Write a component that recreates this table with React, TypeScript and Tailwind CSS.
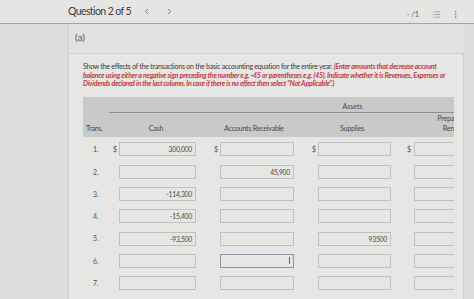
import { ChevronLeft, ChevronRight, List, EllipsisVertical } from 'lucide-react'

type Row = {
  n: number
  cash?: string
  ar?: string
  supplies?: string
  focus?: boolean
}

const rows: Row[] = [
  { n: 1, cash: '300,000' },
  { n: 2, ar: '45,900' },
  { n: 3, cash: '-114,300' },
  { n: 4, cash: '-15,400' },
  { n: 5, cash: '-93,500', supplies: '93500' },
  { n: 6, focus: true },
  { n: 7 },
  { n: 8 },
]

function Cell({ value, focus, width }: { value?: string; focus?: boolean; width: string }) {
  return (
    <div
      className={`${width} h-[14px] shrink-0 flex items-center justify-end pr-[3px] text-[6.8px] tracking-[-0.25px] text-[#4a4a4a] bg-[#e6e6e4] ${
        focus ? 'border-[1.5px] border-[#8e95a2]' : 'border border-[#c0c0be]'
      }`}
    >
      {value}
      {focus && <span className="w-px h-[7px] bg-[#666]" />}
    </div>
  )
}

function Dollar({ show, className }: { show: boolean; className: string }) {
  return <span className={`${className} shrink-0 text-[7px] text-[#555]`}>{show ? '$' : ''}</span>
}

export default function App() {
  return (
    <div className="w-[474px] h-[299px] overflow-hidden bg-[#dcdcda] font-['Lato','Noto_Sans',sans-serif] text-[#333]">
      <header className="h-[24px] flex items-center bg-[#e5e5e3] border-b-[1.5px] border-[#a3a3a1]">
        <div className="pl-[68px] flex items-center">
          <span className="text-[10.5px] tracking-[-0.6px] text-[#3c3c3c]">Question 2 of 5</span>
          <ChevronLeft className="ml-[11px] w-[9px] h-[9px] text-[#555]" strokeWidth={2} />
          <ChevronRight className="ml-[14px] w-[9px] h-[9px] text-[#555]" strokeWidth={2} />
        </div>
        <div className="ml-auto mt-[5px] flex items-center pr-[14px]">
          <span className="text-[8px] tracking-[-0.2px] text-[#666]">- /1</span>
          <List className="ml-[13px] w-[9px] h-[9px] text-[#777]" strokeWidth={1.6} />
          <EllipsisVertical className="ml-[10px] w-[9px] h-[9px] text-[#777]" strokeWidth={2} />
        </div>
      </header>

      <div className="ml-[68px] mr-[10px] border-l border-[#cdcdcb] bg-[#e2e2e0] h-[280px]">
        <div className="h-[29px] flex items-center pb-[3px] pl-[6px] text-[10px] text-[#555]">(a)</div>

        <div className="border-t border-r border-[#cdcdcb] bg-[#e6e6e4] pl-[14px] pr-[11px] pt-[8px] h-[300px]">
          <p className="text-[7px] leading-[8.6px] tracking-[-0.25px] text-[#3a3a3a] whitespace-nowrap">
            Show the effects of the transactions on the basic accounting equation for the entire year.{' '}
            <span className="font-bold italic text-[#c23a3f]">
              (Enter amounts that decrease account
              <br />
              balance using either a negative sign preceding the number e.g. -45 or parentheses e.g. (45). Indicate
              whether it is Revenues, Expenses or
              <br />
              Dividends declared in the last column. In case if there is no effect then select "Not Applicable".)
            </span>
          </p>

          <div className="mt-[9.7px] w-[371px] overflow-hidden">
            <div className="h-[40px] bg-[#c9c9c7] flex flex-col">
              <div className="h-[15px] flex items-center justify-center pl-[168px] pt-[2px] text-[7px] text-[#484848]">
                Assets
              </div>
              <div className="ml-[26px] h-px bg-[#8f8f8d]" />
              <div className="flex-1 flex items-end pb-[4px] text-[7px] tracking-[-0.2px] text-[#484848]">
                <span className="w-[26px] shrink-0 pl-[3px]">Trans.</span>
                <span className="w-[94px] shrink-0 text-center">Cash</span>
                <span className="w-[102px] shrink-0 text-center">Accounts Receivable</span>
                <span className="w-[94px] shrink-0 text-center">Supplies</span>
                <span className="flex-1 text-right leading-[10px]">
                  Prepa
                  <br />
                  Ren
                </span>
              </div>
            </div>

            <div className="pt-[5px] flex flex-col gap-[8.3px]">
              {rows.map((r) => (
                <div key={r.n} className="flex items-center h-[14px]">
                  <span className="w-[26px] shrink-0 pl-[10px] text-[7px] text-[#555]">{r.n < 8 ? `${r.n}.` : ''}</span>
                  <Dollar show={r.n === 1} className="w-[10px] pl-[4px]" />
                  <Cell value={r.cash} width="w-[77px]" />
                  <Dollar show={r.n === 1} className="w-[24px] pl-[18px]" />
                  <Cell value={r.ar} focus={r.focus} width="w-[74px]" />
                  <Dollar show={r.n === 1} className="w-[24px] pl-[18px]" />
                  <Cell value={r.supplies} width="w-[73px]" />
                  <Dollar show={r.n === 1} className="w-[23px] pl-[16px]" />
                  <Cell width="w-[75px]" />
                </div>
              ))}
            </div>
          </div>
        </div>
      </div>
    </div>
  )
}
